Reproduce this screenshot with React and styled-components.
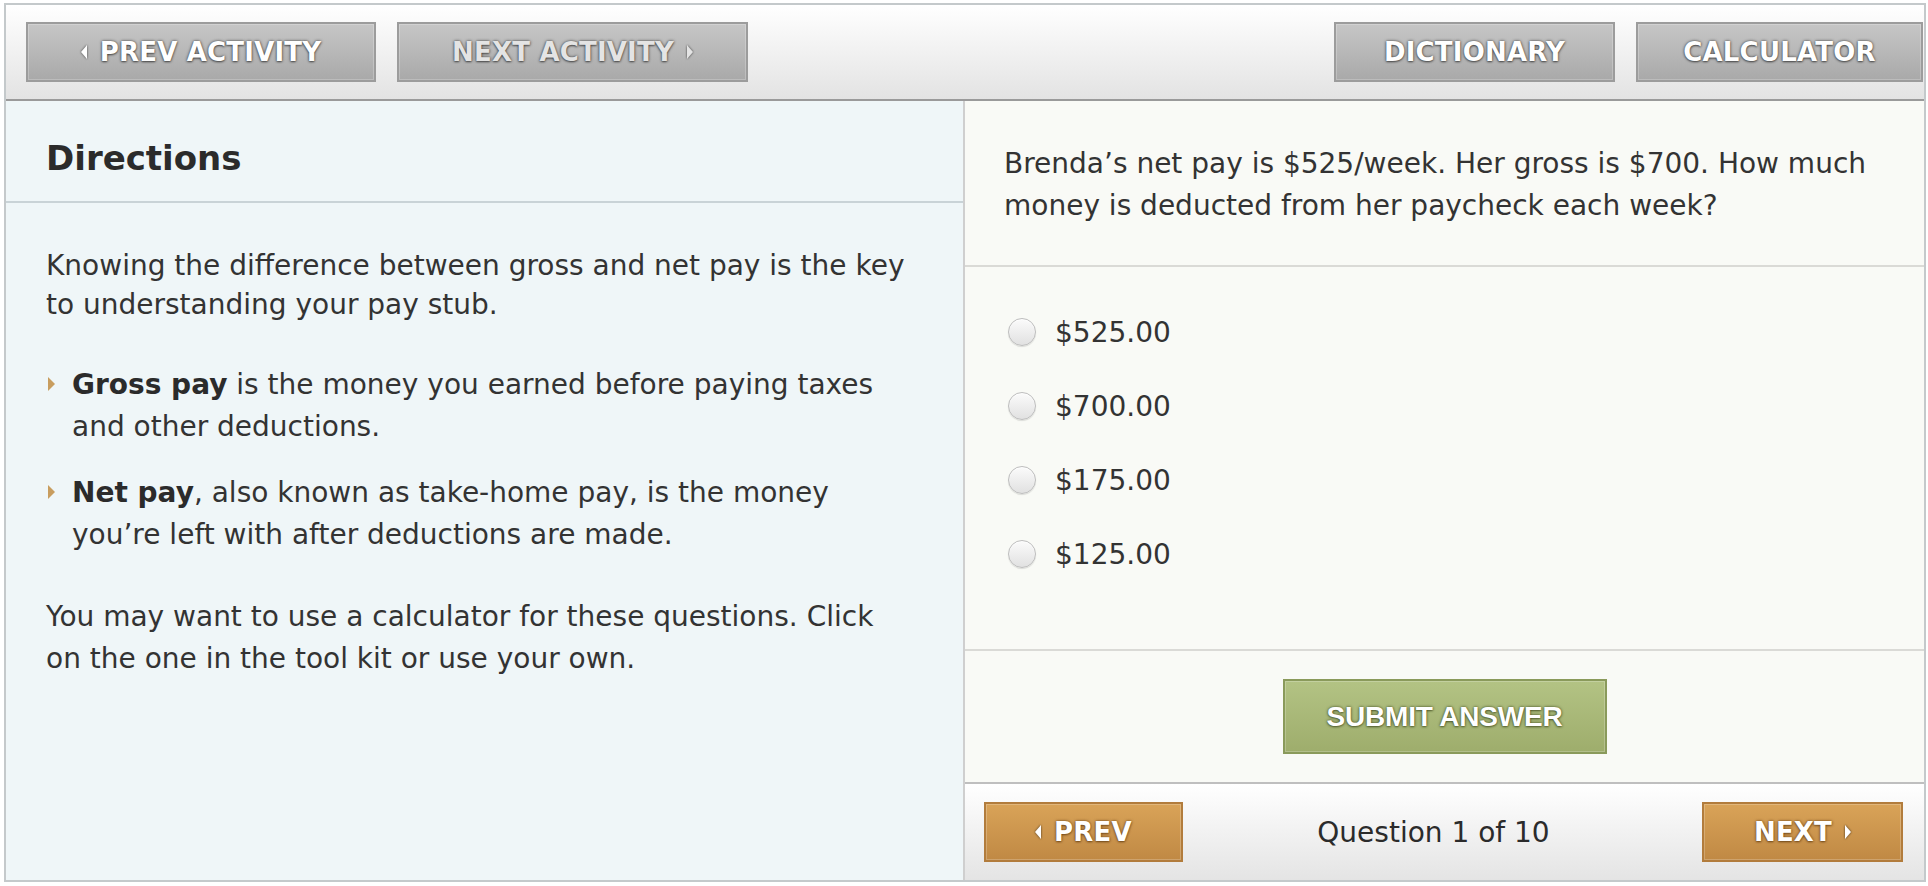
import React from 'react';
import styled, { createGlobalStyle, css } from 'styled-components';

const GlobalStyle = createGlobalStyle`
  html, body {
    margin: 0;
    padding: 0;
    background: #ffffff;
  }
  body {
    font-family: "DejaVu Sans", Verdana, sans-serif;
    color: #333333;
  }
  * { box-sizing: border-box; }
`;

const Frame = styled.div`
  margin: 3px 2px 4px 4px;
  height: calc(100vh - 7px);
  border: 2px solid #c4c9cb;
  display: flex;
  flex-direction: column;
  overflow: hidden;
`;

const TopBar = styled.div`
  height: 96px;
  flex-shrink: 0;
  display: flex;
  align-items: center;
  justify-content: space-between;
  padding: 0 1px 0 20px;
  background: linear-gradient(#ffffff, #e3e3e3);
  border-bottom: 2px solid #9a9a9a;
`;

const Group = styled.div`
  display: flex;
  gap: 21px;
`;

const variants = {
  gray: css`
    border: 2px solid #9c9c9c;
    background: linear-gradient(#c6c6c6, #a9a9a9);
    text-shadow: 0 0 3px rgba(30, 30, 30, 0.8), 0 1px 2px rgba(0, 0, 0, 0.45);
  `,
  orange: css`
    border: 2px solid #b27c3c;
    background: linear-gradient(#d9a358, #c08944);
    text-shadow: 0 0 3px rgba(80, 45, 5, 0.8), 0 1px 2px rgba(60, 30, 0, 0.45);
  `,
  green: css`
    border: 2px solid #8a9a5b;
    background: linear-gradient(#b3c384, #9ead6c);
    text-shadow: 0 0 3px rgba(45, 55, 15, 0.85), 0 1px 2px rgba(40, 50, 10, 0.45);
  `,
};

const Button = styled.button`
  ${(p) => variants[p.$variant || 'gray']}
  width: ${(p) => p.$w}px;
  height: ${(p) => p.$h || 60}px;
  display: flex;
  align-items: center;
  justify-content: center;
  gap: 13px;
  padding: 0;
  margin: 0;
  box-shadow: inset 0 0 0 1px rgba(255, 255, 255, 0.22);
  color: ${(p) => (p.$dim ? '#e4e4e4' : '#ffffff')};
  font-family: ${(p) =>
    p.$variant === 'green'
      ? '"Liberation Sans", Arial, sans-serif'
      : '"DejaVu Sans", Verdana, sans-serif'};
  font-size: ${(p) => (p.$variant === 'green' ? 28 : 26)}px;
  font-weight: bold;
  letter-spacing: ${(p) => (p.$variant === 'green' ? '-0.2px' : '0.2px')};
  line-height: 1;
  cursor: pointer;
`;

const Arrow = styled.span`
  width: 0;
  height: 0;
  border-top: 7px solid transparent;
  border-bottom: 7px solid transparent;
  ${(p) =>
    p.$dir === 'left'
      ? css`border-right: 6px solid ${p.$dim ? '#e4e4e4' : '#ffffff'};`
      : css`border-left: 6px solid ${p.$dim ? '#e4e4e4' : '#ffffff'};`}
  filter: drop-shadow(0 0 1px rgba(0, 0, 0, 0.7));
`;

const Main = styled.div`
  flex: 1;
  display: flex;
  min-height: 0;
`;

const LeftPanel = styled.div`
  width: 957px;
  flex-shrink: 0;
  background: #eff6f8;
`;

const PanelHead = styled.div`
  padding: 37px 40px 22px;
  border-bottom: 2px solid #c9d3d7;
`;

const Title = styled.h2`
  margin: 0;
  font-size: 34px;
  line-height: 41px;
  font-weight: bold;
  color: #2b2b2b;
`;

const PanelBody = styled.div`
  padding: 43px 52px 0 40px;
  font-size: 28px;
  color: #333333;
`;

const Para = styled.p`
  margin: 0 0 ${(p) => p.$mb || 0}px;
  line-height: ${(p) => p.$lh || 42}px;
`;

const List = styled.ul`
  list-style: none;
  margin: 0 0 40px;
  padding: 0;
`;

const Item = styled.li`
  position: relative;
  padding: 0 10px 0 26px;
  line-height: 42px;

  & + & {
    margin-top: 24px;
  }

  &::before {
    content: '';
    position: absolute;
    left: 2px;
    top: 13px;
    border-top: 7.5px solid transparent;
    border-bottom: 7.5px solid transparent;
    border-left: 7px solid #c89d5f;
  }

  b {
    color: #2b2b2b;
  }
`;

const RightPanel = styled.div`
  flex: 1;
  display: flex;
  flex-direction: column;
  background: #f9faf6;
  border-left: 2px solid #cfcfcf;
`;

const Question = styled.div`
  padding: 42px 20px 38px 39px;
  font-size: 28px;
  line-height: 42px;
  border-bottom: 2px solid #dadad6;
`;

const Options = styled.div`
  flex: 1;
  display: flex;
  flex-direction: column;
  gap: 32px;
  padding: 44px 40px 0 43px;
  border-bottom: 2px solid #dadad6;
`;

const Option = styled.label`
  display: flex;
  align-items: center;
  gap: 19px;
  height: 42px;
  font-size: 28px;
  cursor: pointer;
`;

const Radio = styled.input.attrs({ type: 'radio' })`
  appearance: none;
  margin: 0;
  width: 28px;
  height: 28px;
  border-radius: 50%;
  border: 1px solid #bdbdbd;
  background: linear-gradient(#fbfbfb, #e1e1e1);
  box-shadow: inset 0 1px 1px rgba(255, 255, 255, 0.9), 0 1px 1px rgba(0, 0, 0, 0.12);
`;

const SubmitRow = styled.div`
  height: 131px;
  flex-shrink: 0;
  display: flex;
  align-items: center;
  justify-content: center;
`;

const NavBar = styled.div`
  height: 98px;
  flex-shrink: 0;
  display: flex;
  align-items: center;
  justify-content: space-between;
  padding: 0 21px 0 19px;
  border-top: 2px solid #bfbfbf;
  background: linear-gradient(#ffffff, #e4e4e4);
`;

const Counter = styled.span`
  font-size: 28px;
  color: #2b2b2b;
  padding-right: 18px;
`;

const answers = ['$525.00', '$700.00', '$175.00', '$125.00'];

export default function App() {
  return (
    <>
      <GlobalStyle />
      <Frame>
        <TopBar>
          <Group>
            <Button $w={350}>
              <Arrow $dir="left" />
              PREV ACTIVITY
            </Button>
            <Button $w={351} $dim>
              NEXT ACTIVITY
              <Arrow $dir="right" $dim />
            </Button>
          </Group>
          <Group>
            <Button $w={281}>DICTIONARY</Button>
            <Button $w={287}>CALCULATOR</Button>
          </Group>
        </TopBar>
        <Main>
          <LeftPanel>
            <PanelHead>
              <Title>Directions</Title>
            </PanelHead>
            <PanelBody>
              <Para $lh={39} $mb={40}>
                Knowing the difference between gross and net pay is the key to
                understanding your pay stub.
              </Para>
              <List>
                <Item>
                  <b>Gross pay</b> is the money you earned before paying taxes and
                  other deductions.
                </Item>
                <Item>
                  <b>Net pay</b>, also known as take-home pay, is the money you’re
                  left with after deductions are made.
                </Item>
              </List>
              <Para>
                You may want to use a calculator for these questions. Click on the
                one in the tool kit or use your own.
              </Para>
            </PanelBody>
          </LeftPanel>
          <RightPanel>
            <Question>
              Brenda’s net pay is $525/week. Her gross is $700. How much money is
              deducted from her paycheck each week?
            </Question>
            <Options>
              {answers.map((a) => (
                <Option key={a}>
                  <Radio name="answer" value={a} />
                  {a}
                </Option>
              ))}
            </Options>
            <SubmitRow>
              <Button $variant="green" $w={324} $h={75}>
                SUBMIT ANSWER
              </Button>
            </SubmitRow>
            <NavBar>
              <Button $variant="orange" $w={199}>
                <Arrow $dir="left" />
                PREV
              </Button>
              <Counter>Question 1 of 10</Counter>
              <Button $variant="orange" $w={201}>
                NEXT
                <Arrow $dir="right" />
              </Button>
            </NavBar>
          </RightPanel>
        </Main>
      </Frame>
    </>
  );
}
